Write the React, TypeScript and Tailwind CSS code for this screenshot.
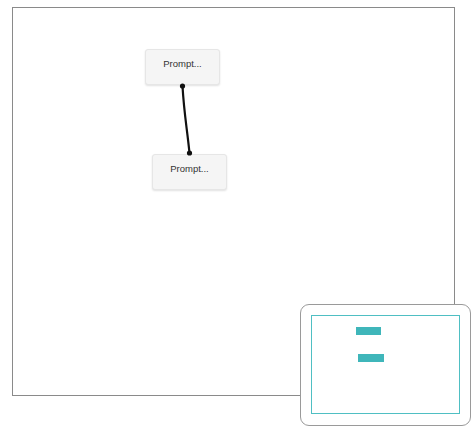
import React from "react";

export default function App() {
  return (
    <div className="relative w-[474px] h-[430px] bg-white overflow-hidden" style={{ fontFamily: '"Liberation Sans", Arial, sans-serif' }}>
      <div className="absolute left-[12px] top-[7px] w-[443px] h-[389px] border border-[#8a8a8a] bg-white">
        <div className="absolute left-[132px] top-[41px] w-[75px] h-[36px] bg-[#f5f5f5] border border-[#e6e6e6] rounded-[3px] shadow-[0_1px_2px_rgba(0,0,0,0.12)] flex justify-center pt-[7px] text-[9.5px] text-[#333]">
          Prompt...
        </div>
        <div className="absolute left-[139px] top-[146px] w-[75px] h-[36px] bg-[#f5f5f5] border border-[#e6e6e6] rounded-[3px] shadow-[0_1px_2px_rgba(0,0,0,0.12)] flex justify-center pt-[7px] text-[9.5px] text-[#333]">
          Prompt...
        </div>
        <svg className="absolute left-0 top-0 z-10 pointer-events-none" width="443" height="389">
          <path d="M169.5 78 C 171 105, 174 120, 176.5 145" stroke="#111" strokeWidth="2.2" fill="none" />
          <circle cx="169.5" cy="78" r="2.6" fill="#111" />
          <circle cx="176.5" cy="145" r="2.6" fill="#111" />
        </svg>
      </div>
      <div className="absolute left-[300px] top-[304px] w-[171px] h-[122px] bg-white border-[1.5px] border-[#9a9a9a] rounded-[9px]">
        <div className="absolute left-[10px] top-[10px] w-[149px] h-[99px] border-[1.5px] border-[#4fbfc3]">
          <div className="absolute left-[44px] top-[11px] w-[25px] h-[8px] bg-[#3fb6ba]" />
          <div className="absolute left-[46px] top-[38px] w-[26px] h-[8px] bg-[#3fb6ba]" />
        </div>
      </div>
    </div>
  );
}
